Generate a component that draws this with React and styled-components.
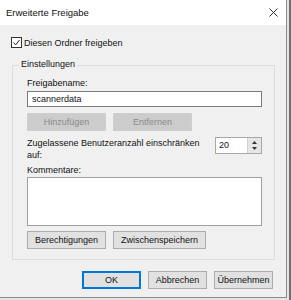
import styled, { createGlobalStyle } from "styled-components";

const GlobalStyle = createGlobalStyle`
  html, body {
    margin: 0;
    padding: 0;
    background: #e6e6e6;
  }
  body {
    font-family: "Liberation Sans", Arial, sans-serif;
    font-size: 9px;
    color: #111;
  }
`;

const Screen = styled.div`
  width: 291px;
  height: 300px;
  background: #e4e4e4;
  border-right: 2px solid #6f6f6f;
  box-sizing: border-box;
  overflow: hidden;
`;

const Dialog = styled.div`
  width: 287px;
  height: 298px;
  box-sizing: border-box;
  border-right: 1px solid #8c8c8c;
  border-bottom: 1px solid #8c8c8c;
  background: #f0f0f0;
  display: flex;
  flex-direction: column;
`;

const TitleBar = styled.div`
  height: 25px;
  flex-shrink: 0;
  background: #ffffff;
  display: flex;
  align-items: center;
  justify-content: space-between;
  padding: 0 8px 0 6px;
  font-size: 9.5px;
  color: #111;
`;

const Close = styled.svg`
  width: 9px;
  height: 9px;
  margin-top: -1px;
`;

const Body = styled.div`
  flex: 1;
  display: flex;
  flex-direction: column;
  padding: 12px 0 0 11px;
`;

const CheckRow = styled.label`
  display: flex;
  align-items: center;
  gap: 2px;
  height: 11px;
`;

const Box = styled.span`
  width: 9px;
  height: 9px;
  border: 1px solid #333;
  background: #fff;
  display: flex;
  align-items: center;
  justify-content: center;
`;

const Group = styled.div`
  width: 263px;
  box-sizing: border-box;
  margin: 17px 0 0 1px;
  padding: 0 12px 10px 14px;
  border: 1px solid #dcdcdc;
  display: flex;
  flex-direction: column;
`;

const Legend = styled.span`
  align-self: flex-start;
  margin: -8px 0 0 -8px;
  padding: 0 2px;
  line-height: 12px;
  background: #f0f0f0;
`;

const Label = styled.div`
  line-height: 12px;
  white-space: nowrap;
  margin-top: ${(p) => p.$top || 0}px;
`;

const Input = styled.div`
  height: 14px;
  border: 1px solid #7a7a7a;
  background: #fff;
  margin-top: 2px;
  padding-left: 4px;
  line-height: 14px;
`;

const Row = styled.div`
  display: flex;
  gap: 7px;
  margin-top: ${(p) => p.$top || 0}px;
`;

const Button = styled.div`
  width: ${(p) => p.$w}px;
  height: 16px;
  border: 1px solid ${(p) => (p.$primary ? "#0078d7" : p.$disabled ? "#cfcfcf" : "#adadad")};
  box-shadow: ${(p) => (p.$primary ? "inset 0 0 0 1px #0078d7" : "none")};
  background: ${(p) => (p.$disabled ? "#cccccc" : "#e1e1e1")};
  color: ${(p) => (p.$disabled ? "#8a8a8a" : "#111")};
  display: flex;
  align-items: center;
  justify-content: center;
`;

const LimitRow = styled.div`
  display: flex;
  justify-content: space-between;
  align-items: flex-start;
  margin-top: 6px;
`;

const Spin = styled.div`
  display: flex;
  height: 15px;
  border: 1px solid #a8a8a8;
  background: #fff;
`;

const SpinValue = styled.div`
  width: 31px;
  padding-left: 3px;
  line-height: 15px;
  box-sizing: border-box;
`;

const SpinArrows = styled.div`
  width: 14px;
  background: #e6e6e6;
  border-left: 1px solid #d0d0d0;
  display: flex;
  flex-direction: column;
  align-items: center;
  justify-content: space-around;
  padding: 2px 0;
  box-sizing: border-box;
`;

const TextArea = styled.div`
  height: 47px;
  border: 1px solid #a0a0a0;
  background: #fff;
  margin-top: 1px;
`;

const Footer = styled.div`
  width: 262px;
  display: flex;
  justify-content: flex-end;
  gap: 7px;
  margin-top: 11px;
`;

const Arrow = ({ up }) => (
  <svg width="5" height="3" viewBox="0 0 5 3">
    <path d={up ? "M0 3L2.5 0L5 3Z" : "M0 0L2.5 3L5 0Z"} fill="#333" />
  </svg>
);

export default function App() {
  return (
    <>
      <GlobalStyle />
      <Screen>
        <Dialog>
          <TitleBar>
            <span>Erweiterte Freigabe</span>
            <Close viewBox="0 0 9 9">
              <path d="M0.5 0.5L8.5 8.5M8.5 0.5L0.5 8.5" stroke="#333" strokeWidth="1" />
            </Close>
          </TitleBar>
          <Body>
            <CheckRow>
              <Box>
                <svg width="7" height="7" viewBox="0 0 7 7">
                  <path d="M0.5 3.5L2.7 5.8L6.5 1" fill="none" stroke="#222" strokeWidth="1" />
                </svg>
              </Box>
              Diesen Ordner freigeben
            </CheckRow>
            <Group>
              <Legend>Einstellungen</Legend>
              <Label $top={7}>Freigabename:</Label>
              <Input>scannerdata</Input>
              <Row $top={6}>
                <Button $w={77} $disabled>Hinzufügen</Button>
                <Button $w={77} $disabled>Entfernen</Button>
              </Row>
              <LimitRow>
                <Label>
                  Zugelassene Benutzeranzahl einschränken
                  <br />
                  auf:
                </Label>
                <Spin>
                  <SpinValue>20</SpinValue>
                  <SpinArrows>
                    <Arrow up />
                    <Arrow />
                  </SpinArrows>
                </Spin>
              </LimitRow>
              <Label $top={3}>Kommentare:</Label>
              <TextArea />
              <Row $top={5}>
                <Button $w={77}>Berechtigungen</Button>
                <Button $w={91}>Zwischenspeichern</Button>
              </Row>
            </Group>
            <Footer>
              <Button $w={57} $primary>OK</Button>
              <Button $w={57}>Abbrechen</Button>
              <Button $w={57}>Übernehmen</Button>
            </Footer>
          </Body>
        </Dialog>
      </Screen>
    </>
  );
}
